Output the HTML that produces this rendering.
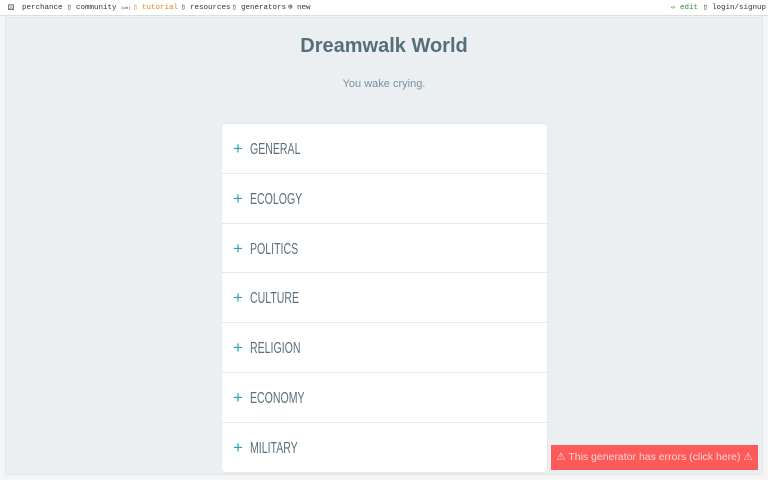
<!DOCTYPE html>
<html><head><meta charset="utf-8"><style>
*{box-sizing:border-box;margin:0;padding:0}
body{width:768px;height:480px;overflow:hidden;background:#f5f5f5;font-family:"Liberation Sans",sans-serif;position:relative}
.top{position:absolute;left:0;top:0;width:768px;height:16px;background:#fff;border-bottom:1px solid #ddd;font-family:"Liberation Mono",monospace;font-size:7.5px;color:#333;line-height:17px}
.top span{position:absolute;top:0;white-space:nowrap}
.main{position:absolute;left:5px;top:17px;width:758px;height:458px;background:#eceff1;border:1px solid #e2e5e7}
h1{position:absolute;top:35px;left:0;width:768px;text-align:center;font-size:20px;color:#546e7a;font-weight:bold}
.sub{position:absolute;top:78px;left:0;width:768px;text-align:center;font-size:11px;color:#78909c}
.card{position:absolute;left:222px;top:124px;width:325px;height:348px;background:#fff;border-radius:3px;box-shadow:0 0 1px rgba(0,0,0,.15)}
.row{height:49.8px;border-bottom:1px solid #e6e8ea;position:relative}
.row:last-child{border-bottom:none}
.row b{position:absolute;left:11px;top:15px;font-weight:normal;color:#26a3b5;font-size:17px;line-height:20px}
.row i{position:absolute;left:28px;top:16px;font-style:normal;font-size:16px;color:#5a707c;line-height:20px;transform:scaleX(.66);transform-origin:0 50%;white-space:nowrap}
.err{position:absolute;left:551px;top:445px;width:207px;height:25px;background:#ff5a5a;color:#ffd6d6;font-size:10.5px;line-height:25px;text-align:center;white-space:nowrap}
</style></head><body>
<div class="top">
<span style="left:8px;font-size:10px">⚄</span>
<span style="left:22px">perchance</span>
<span style="left:67px">▯ community <small style="font-size:4px">(wh)</small></span>
<span style="left:133px;color:#e67e22">▯ tutorial</span>
<span style="left:181px">▯ resources</span>
<span style="left:232px">▯ generators</span>
<span style="left:288px">⊕ new</span>
<span style="left:671px;color:#2e8b3a">✏ edit</span>
<span style="left:703px">▯ login/signup</span>
</div>
<div class="main"></div>
<h1>Dreamwalk World</h1>
<div class="sub">You wake crying.</div>
<div class="card">
<div class="row"><b>+</b><i>GENERAL</i></div>
<div class="row"><b>+</b><i>ECOLOGY</i></div>
<div class="row"><b>+</b><i>POLITICS</i></div>
<div class="row"><b>+</b><i>CULTURE</i></div>
<div class="row"><b>+</b><i>RELIGION</i></div>
<div class="row"><b>+</b><i>ECONOMY</i></div>
<div class="row"><b>+</b><i>MILITARY</i></div>
</div>
<div class="err">⚠ This generator has errors (click here) ⚠</div>
</body></html>
